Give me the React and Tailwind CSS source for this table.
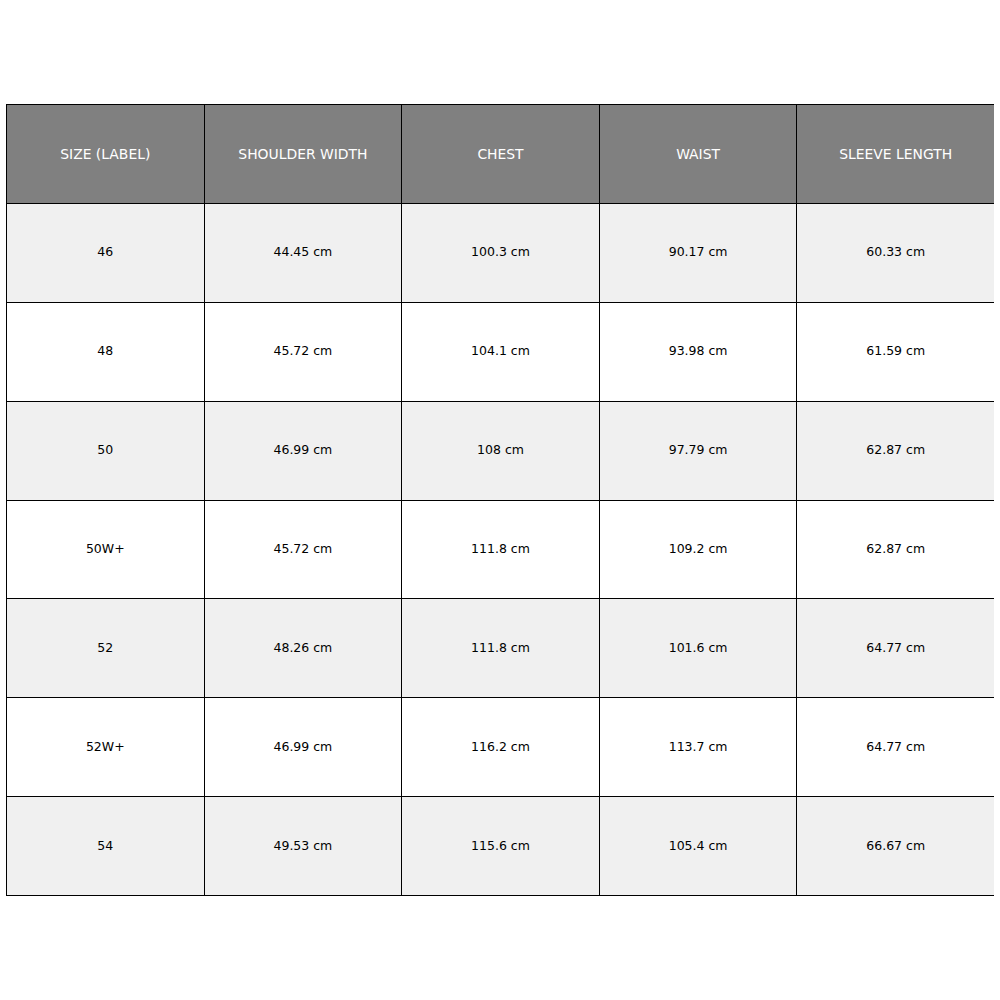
const headers = ["SIZE (LABEL)", "SHOULDER WIDTH", "CHEST", "WAIST", "SLEEVE LENGTH"];

const rows = [
  ["46", "44.45 cm", "100.3 cm", "90.17 cm", "60.33 cm"],
  ["48", "45.72 cm", "104.1 cm", "93.98 cm", "61.59 cm"],
  ["50", "46.99 cm", "108 cm", "97.79 cm", "62.87 cm"],
  ["50W+", "45.72 cm", "111.8 cm", "109.2 cm", "62.87 cm"],
  ["52", "48.26 cm", "111.8 cm", "101.6 cm", "64.77 cm"],
  ["52W+", "46.99 cm", "116.2 cm", "113.7 cm", "64.77 cm"],
  ["54", "49.53 cm", "115.6 cm", "105.4 cm", "66.67 cm"],
];

export default function App() {
  return (
    <div
      className="w-[1000px] h-[1000px] bg-white pt-[104px] pl-[6px]"
      style={{ fontFamily: '"DejaVu Sans", "Liberation Sans", sans-serif' }}
    >
      <div className="w-[988px] overflow-hidden border-b border-black">
        {/* header */}
        <div className="grid grid-cols-5 h-[98.875px]">
          {headers.map((h) => (
            <div
              key={h}
              className="flex items-center justify-center border-l border-t border-black bg-[#808080] text-white text-[13.9px]"
            >
              {h}
            </div>
          ))}
        </div>

        {/* body */}
        {rows.map((row, i) => (
          <div
            key={i}
            className={`grid grid-cols-5 h-[98.875px] ${i % 2 === 0 ? "bg-[#f0f0f0]" : "bg-white"}`}
          >
            {row.map((cell, j) => (
              <div
                key={j}
                className="flex items-center justify-center border-l border-t border-black text-black text-[12.5px]"
              >
                {cell}
              </div>
            ))}
          </div>
        ))}
      </div>
    </div>
  );
}
